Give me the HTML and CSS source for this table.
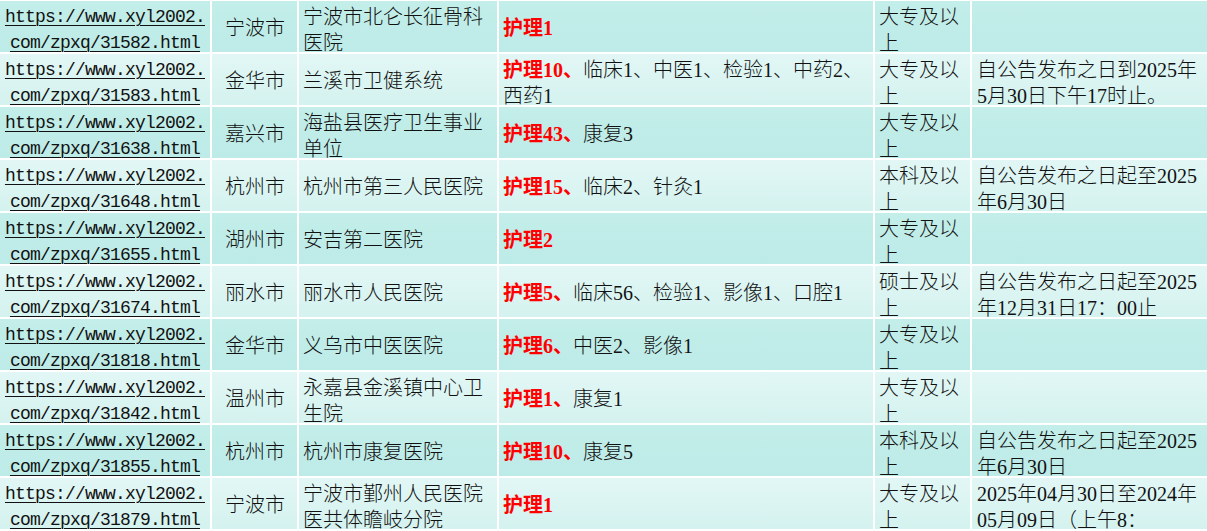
FILE: index.html
```html
<!DOCTYPE html>
<html lang="zh-CN">
<head>
<meta charset="utf-8">
<title>招聘信息</title>
<link rel="stylesheet" href="styles.css">
</head>
<body>
<div class="sheet">
  <div class="row odd">
    <div class="c url"><a class="t" href="#">https://www.xyl2002.com/zpxq/31582.html</a></div>
    <div class="c city"><span class="t">宁波市</span></div>
    <div class="c"><span class="t">宁波市北仑长征骨科医院</span></div>
    <div class="c"><span class="t"><b>护理1</b></span></div>
    <div class="c"><span class="t">大专及以上</span></div>
    <div class="c note"><span class="t"></span></div>
  </div>
  <div class="row even">
    <div class="c url"><a class="t" href="#">https://www.xyl2002.com/zpxq/31583.html</a></div>
    <div class="c city"><span class="t">金华市</span></div>
    <div class="c"><span class="t">兰溪市卫健系统</span></div>
    <div class="c"><span class="t"><b>护理10、</b>临床1、中医1、检验1、中药2、西药1</span></div>
    <div class="c"><span class="t">大专及以上</span></div>
    <div class="c note"><span class="t">自公告发布之日到2025年5月30日下午17时止。</span></div>
  </div>
  <div class="row odd">
    <div class="c url"><a class="t" href="#">https://www.xyl2002.com/zpxq/31638.html</a></div>
    <div class="c city"><span class="t">嘉兴市</span></div>
    <div class="c"><span class="t">海盐县医疗卫生事业单位</span></div>
    <div class="c"><span class="t"><b>护理43、</b>康复3</span></div>
    <div class="c"><span class="t">大专及以上</span></div>
    <div class="c note"><span class="t"></span></div>
  </div>
  <div class="row even">
    <div class="c url"><a class="t" href="#">https://www.xyl2002.com/zpxq/31648.html</a></div>
    <div class="c city"><span class="t">杭州市</span></div>
    <div class="c"><span class="t">杭州市第三人民医院</span></div>
    <div class="c"><span class="t"><b>护理15、</b>临床2、针灸1</span></div>
    <div class="c"><span class="t">本科及以上</span></div>
    <div class="c note"><span class="t">自公告发布之日起至2025年6月30日</span></div>
  </div>
  <div class="row odd">
    <div class="c url"><a class="t" href="#">https://www.xyl2002.com/zpxq/31655.html</a></div>
    <div class="c city"><span class="t">湖州市</span></div>
    <div class="c"><span class="t">安吉第二医院</span></div>
    <div class="c"><span class="t"><b>护理2</b></span></div>
    <div class="c"><span class="t">大专及以上</span></div>
    <div class="c note"><span class="t"></span></div>
  </div>
  <div class="row even">
    <div class="c url"><a class="t" href="#">https://www.xyl2002.com/zpxq/31674.html</a></div>
    <div class="c city"><span class="t">丽水市</span></div>
    <div class="c"><span class="t">丽水市人民医院</span></div>
    <div class="c"><span class="t"><b>护理5、</b>临床56、检验1、影像1、口腔1</span></div>
    <div class="c"><span class="t">硕士及以上</span></div>
    <div class="c note"><span class="t">自公告发布之日起至2025年12月31日17：00止</span></div>
  </div>
  <div class="row odd">
    <div class="c url"><a class="t" href="#">https://www.xyl2002.com/zpxq/31818.html</a></div>
    <div class="c city"><span class="t">金华市</span></div>
    <div class="c"><span class="t">义乌市中医医院</span></div>
    <div class="c"><span class="t"><b>护理6、</b>中医2、影像1</span></div>
    <div class="c"><span class="t">大专及以上</span></div>
    <div class="c note"><span class="t"></span></div>
  </div>
  <div class="row even">
    <div class="c url"><a class="t" href="#">https://www.xyl2002.com/zpxq/31842.html</a></div>
    <div class="c city"><span class="t">温州市</span></div>
    <div class="c"><span class="t">永嘉县金溪镇中心卫生院</span></div>
    <div class="c"><span class="t"><b>护理1、</b>康复1</span></div>
    <div class="c"><span class="t">大专及以上</span></div>
    <div class="c note"><span class="t"></span></div>
  </div>
  <div class="row odd">
    <div class="c url"><a class="t" href="#">https://www.xyl2002.com/zpxq/31855.html</a></div>
    <div class="c city"><span class="t">杭州市</span></div>
    <div class="c"><span class="t">杭州市康复医院</span></div>
    <div class="c"><span class="t"><b>护理10、</b>康复5</span></div>
    <div class="c"><span class="t">本科及以上</span></div>
    <div class="c note"><span class="t">自公告发布之日起至2025年6月30日</span></div>
  </div>
  <div class="row even">
    <div class="c url"><a class="t" href="#">https://www.xyl2002.com/zpxq/31879.html</a></div>
    <div class="c city"><span class="t">宁波市</span></div>
    <div class="c"><span class="t">宁波市鄞州人民医院医共体瞻岐分院</span></div>
    <div class="c"><span class="t"><b>护理1</b></span></div>
    <div class="c"><span class="t">大专及以上</span></div>
    <div class="c note"><span class="t">2025年04月30日至2024年05月09日（上午8：</span></div>
  </div>
</div>
</body>
</html>
```
FILE: styles.css
```css
html, body {
  margin: 0;
  padding: 0;
  background: #ffffff;
}
body {
  font-family: "Liberation Serif", "Noto Sans CJK SC", serif;
  font-size: 20px;
  font-weight: 300;
  line-height: 26px;
  color: #111111;
  overflow: hidden;
  height: 531px;
}
.sheet {
  display: grid;
  grid-template-columns: 210px 85px 198px 374px 95px 235px;
  grid-auto-rows: 51px;
  gap: 2px;
  width: 1207px;
  margin-top: 1px;
}
.row {
  display: contents;
}
.c {
  display: flex;
  align-items: safe center;
  padding: 3px 3px 0 4px;
  min-width: 0;
}
.odd .c {
  background: linear-gradient(#c3eeea, #bdebe7);
}
.even .c {
  background: linear-gradient(#e2f7f5, #d4f2ef);
}
.t {
  display: block;
  width: 100%;
}
.url {
  padding: 3px 4px 0 4px;
  justify-content: center;
}
.url .t {
  font-family: "Liberation Mono", monospace;
  font-weight: 400;
  font-size: 18px;
  letter-spacing: -0.8px;
  text-align: center;
  color: #111111;
  text-decoration: underline;
  text-underline-offset: 3px;
  text-decoration-thickness: 1px;
  word-break: break-all;
}
.city {
  justify-content: center;
}
.city .t {
  text-align: center;
}
.note {
  padding-left: 5px;
  padding-right: 8px;
}
b {
  color: #ff0000;
  font-weight: 700;
}
```
